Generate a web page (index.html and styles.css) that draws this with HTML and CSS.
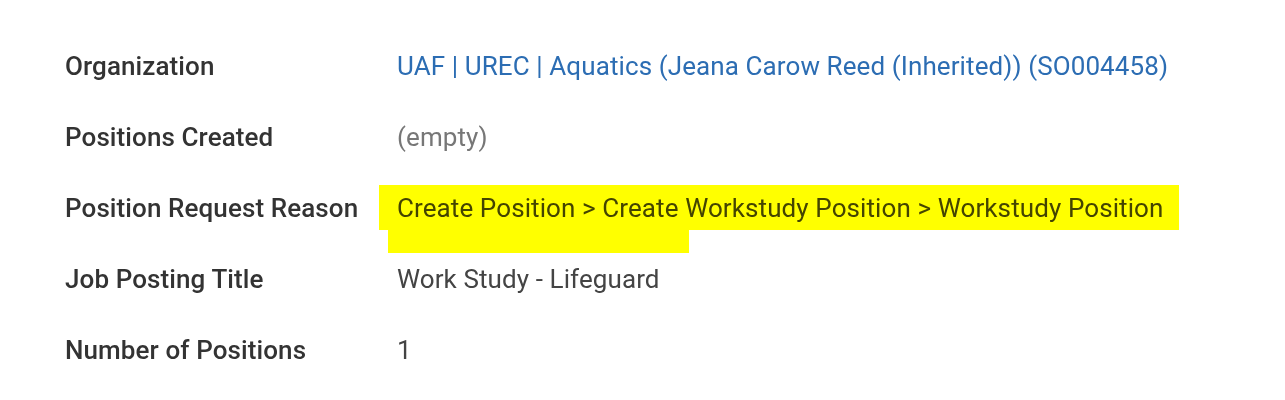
FILE: index.html
```html
<!DOCTYPE html>
<html>
<head>
<meta charset="utf-8">
<link rel="stylesheet" href="styles.css">
</head>
<body>
<div class="page">
  <dl class="fields">
    <dt class="label">Organization</dt>
    <dd class="value"><a class="link" href="#">UAF | UREC | Aquatics (Jeana Carow Reed (Inherited)) (SO004458)</a></dd>

    <dt class="label">Positions Created</dt>
    <dd class="value empty">(empty)</dd>

    <dt class="label">Position Request Reason</dt>
    <dd class="value marked">Create Position &gt; Create Workstudy Position &gt; Workstudy Position
      <span class="hl hl-main"></span><span class="hl hl-tail"></span>
    </dd>

    <dt class="label">Job Posting Title</dt>
    <dd class="value">Work Study - Lifeguard</dd>

    <dt class="label">Number of Positions</dt>
    <dd class="value">1</dd>
  </dl>
</div>
</body>
</html>
```

FILE: styles.css
```css
html, body {
  margin: 0;
  padding: 0;
  background: #ffffff;
}
body {
  font-family: Roboto, "Liberation Sans", Arial, sans-serif;
  width: 1285px;
  height: 400px;
  overflow: hidden;
}
.page {
  padding: 51px 0 0 65px;
}
.fields {
  margin: 0;
  display: grid;
  grid-template-columns: 332px 1fr;
  row-gap: 41px;
  font-size: 26px;
  line-height: 30px;
  letter-spacing: 0.1px;
}
.label {
  margin: 0;
  font-weight: 500;
  color: #333333;
}
.value {
  margin: 0;
  color: #444444;
  position: relative;
}
.link {
  color: #2c6db3;
  text-decoration: none;
}
.empty {
  color: #777777;
}
.hl {
  position: absolute;
  background: #ffff00;
  mix-blend-mode: multiply;
}
.hl-main {
  left: -18px;
  top: -8px;
  width: 800px;
  height: 45px;
}
.hl-tail {
  left: -9px;
  top: 37px;
  width: 301px;
  height: 23px;
}
```
